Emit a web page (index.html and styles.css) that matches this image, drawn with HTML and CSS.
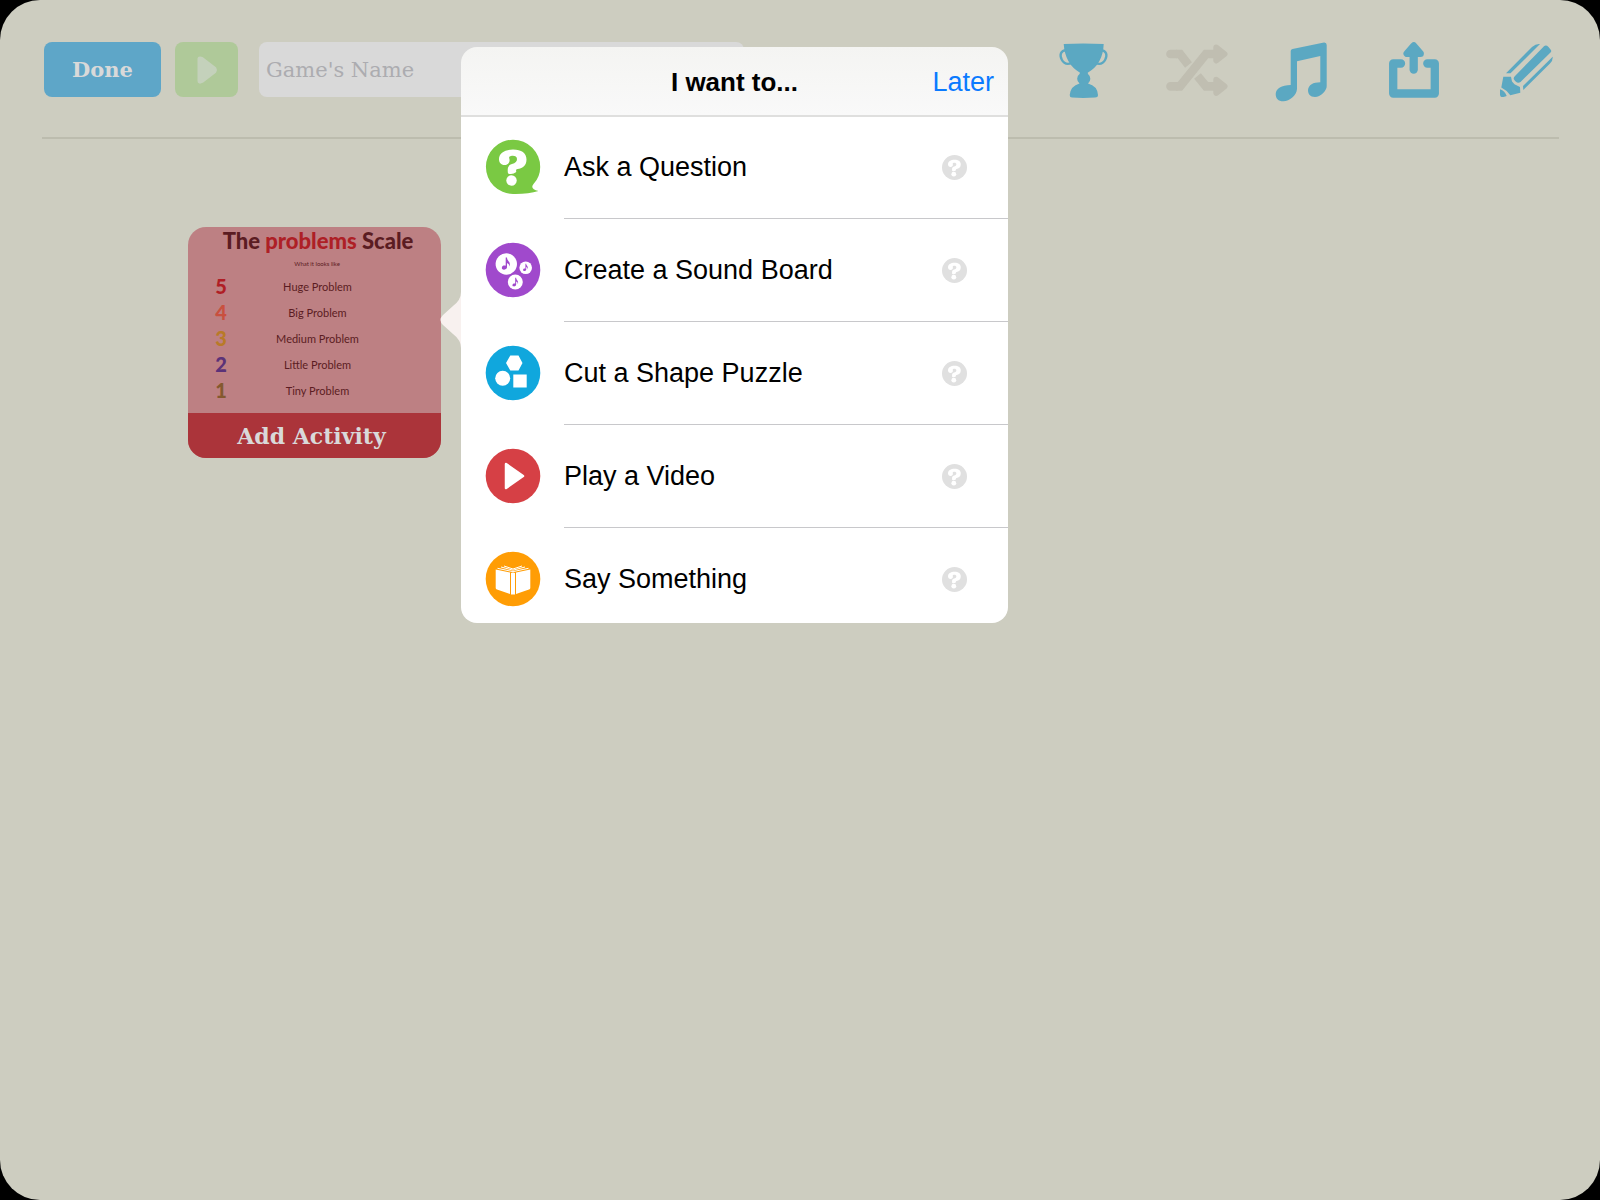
FILE: index.html
```html
<!DOCTYPE html>
<html lang="en">
<head>
    <meta charset="UTF-8">
    <meta name="viewport" content="width=device-width, initial-scale=1">
    <title>Game Editor</title>
    <link rel="stylesheet" href="styles.css">
</head>
<body>
    <!-- shared question mark -->
    <svg width="0" height="0" class="symbols" aria-hidden="true">
        <symbol id="question" viewBox="0 0 54 54">
            <path d="M13 20C13 14 19 10.500 27 10.500C35.500 10.500 40.500 14 40.500 20.500C40.500 27 36 29.500 31.500 30C29.700 30.300 30 31.500 30.300 33Q26.500 36 22 34.500C21 28.500 22.500 26 26 25C29.500 24 31 22.500 31 20C31 17.300 28 16.200 25 17Q22.500 17.500 23.300 19.500C24.500 23 22 26 18.500 26C15 26 13 23.500 13 20Z"/>
            <circle cx="25.500" cy="41.500" r="5.200"/>
        </symbol>
    </svg>

    <main class="screen">
        <header class="toolbar">
            <button type="button" class="btn done-btn">Done</button>
            <button type="button" class="btn play-btn" aria-label="Play">
                <svg width="24" height="32" viewBox="0 0 24 32"><path d="M4 4.500Q4 4 5 4L7 4.500L20 14.500Q21 16 20 17.500L7 27.500Q4 29 4 27Z" stroke-width="3" stroke-linejoin="round"/></svg>
            </button>
            <input type="text" class="name-input" placeholder="Game's Name" aria-label="Game's Name">
            <div class="tools">
                <button type="button" class="tool" aria-label="Rewards">
                    <svg width="64" height="64" viewBox="0 0 64 64">
                        <path d="M12.700 4Q32 3 52.700 4Q52 24 36.700 32.700L37 34A6 6 0 0 1 37 43.500Q46.500 46 47 55Q47 57.500 44 57.500Q32 58.300 21 57.500Q18.700 57.500 18.700 55Q19.500 46 28.500 43.500A6 6 0 0 1 28.500 34L29 32.700Q14 24 12.700 4Z"/>
                        <path d="M15.500 10C9.500 10.500 8.300 15 10.800 19.800C13 24 17 24.500 20.500 23.200M49.500 10C55.500 10.500 56.700 15 54.200 19.800C52 24 48 24.500 44.500 23.200" fill="none" stroke="currentColor" stroke-width="2.300"/>
                    </svg>
                </button>
                <button type="button" class="tool tool-off" aria-label="Shuffle">
                    <svg width="64" height="64" viewBox="0 0 64 64">
                        <g fill="none" stroke="currentColor" stroke-width="8.700">
                            <path d="M14 14H18L26.500 25M35.500 36L44 46.300H53M14 46.300H18L44 14H53"/>
                            <path d="M8.500 14H14M8.500 46.300H14" stroke-linecap="round"/>
                        </g>
                        <path d="M54.300 7.500L62.500 14L54.300 20.500ZM54.300 39.800L62.500 46.300L54.300 52.800Z" stroke="currentColor" stroke-width="6" stroke-linejoin="round"/>
                    </svg>
                </button>
                <button type="button" class="tool" aria-label="Music">
                    <svg width="64" height="64" viewBox="0 0 64 64">
                        <path d="M17.700 11Q17.700 9.300 19.500 9L51 2.500Q53.700 2.300 53.700 5V46C54 50.500 47.500 57 42 57C37 57 35 54 35 50C35.500 45 40 42.300 47.300 42.300V16L24 21.300V49C23.500 55.500 16.500 61.300 10.500 61.300C5 61.300 2.700 58.500 2.700 54C3 48.500 8.500 45 17.700 45Z"/>
                    </svg>
                </button>
                <button type="button" class="tool" aria-label="Share">
                    <svg width="64" height="64" viewBox="0 0 64 64">
                        <path d="M17 23.500H9.200V53.500H50.800V23.500H43.300" fill="none" stroke="currentColor" stroke-width="8.300" stroke-linecap="round" stroke-linejoin="round"/>
                        <path d="M29.700 13V29.500" fill="none" stroke="currentColor" stroke-width="8.300" stroke-linecap="round"/>
                        <path d="M29.700 5.800L23 13.500H36.400Z" stroke="currentColor" stroke-width="7" stroke-linejoin="round"/>
                    </svg>
                </button>
                <button type="button" class="tool" aria-label="Edit">
                    <svg width="64" height="64" viewBox="0 0 64 64">
                        <path d="M11 33.300L37 7Q41 3.500 45 4L15.500 33.300ZM28 46L57.700 16.700Q58 20.500 55 23.500L28.300 50ZM20 36L49 6.300Q51 4.500 53.500 7L55.500 9.500Q57 11 55.500 12.500L25.500 42Q24 43 22 42.500Q20 41.500 18.700 39Q18.500 37.500 20 36ZM8.300 36.700H16L17 41.500L19.500 44.300L25 47L25.300 52.700L15.300 55.300Q11.500 50 6.300 47.500ZM5 49.300Q10 51 11.700 56L8.500 57Q5 57.500 5 54.500Z"/>
                    </svg>
                </button>
            </div>
        </header>

        <section class="board">
            <article class="card">
                <div class="card-scale">
                    <h2>The <em>problems</em> Scale</h2>
                    <p class="card-note">What it looks like</p>
                    <ul class="levels">
                        <li><b class="level-5">5</b><span>Huge Problem</span></li>
                        <li><b class="level-4">4</b><span>Big Problem</span></li>
                        <li><b class="level-3">3</b><span>Medium Problem</span></li>
                        <li><b class="level-2">2</b><span>Little Problem</span></li>
                        <li><b class="level-1">1</b><span>Tiny Problem</span></li>
                    </ul>
                </div>
                <button type="button" class="card-btn">Add Activity</button>
            </article>
        </section>

        <div class="popover" role="dialog" aria-labelledby="popover-title">
            <svg class="popover-arrow" width="21" height="56" viewBox="0 0 21 56"><path d="M21 0Q21 8 13 14L3 23Q-2 28 3 33L13 42Q21 48 21 56Z"/></svg>
            <div class="popover-head">
                <h1 id="popover-title">I want to...</h1>
                <button type="button" class="later-btn">Later</button>
            </div>
            <ul class="menu">
                <li class="menu-item">
                    <svg class="menu-icon" width="56" height="56" viewBox="0 0 56 56">
                        <path d="M28 .7A27.200 27.200 0 0 1 55.200 28Q55.200 38 48.500 45Q44.500 50 53.500 52Q43 55.200 28 54.900A27.100 27.100 0 1 1 28 .7Z" fill="#7ac943"/>
                        <use href="#question" width="54" height="54" x="1" fill="#fff"/>
                    </svg>
                    <div class="menu-body">
                        <button type="button" class="menu-link">Ask a Question</button>
                        <button type="button" class="help-btn" aria-label="About Ask a Question"><svg width="25" height="25" viewBox="0 0 54 54"><use href="#question" width="54" height="54" fill="#fff"/></svg></button>
                    </div>
                </li>
                <li class="menu-item">
                    <svg class="menu-icon" width="56" height="56" viewBox="0 0 56 56">
                        <circle cx="28" cy="28" r="27.300" fill="#a049cc"/>
                        <g fill="#fff"><circle cx="21.300" cy="22" r="10.700"/><circle cx="40.700" cy="25.700" r="6.300"/><circle cx="30.300" cy="40" r="7.500"/></g>
                        <g fill="#a049cc">
                            <path id="note" d="M20.700 15.500H22C22 19 26 19.500 24.500 24.500Q24.300 21.500 22 21V25.500C21.500 28 17 28.500 16.800 26C17 23.500 19 23.300 20.700 23.700Z"/>
                            <use href="#note" transform="translate(28 12.500) scale(.6)"/>
                            <use href="#note" transform="translate(15.300 24.500) scale(.72)"/>
                        </g>
                    </svg>
                    <div class="menu-body">
                        <button type="button" class="menu-link">Create a Sound Board</button>
                        <button type="button" class="help-btn" aria-label="About Create a Sound Board"><svg width="25" height="25" viewBox="0 0 54 54"><use href="#question" width="54" height="54" fill="#fff"/></svg></button>
                    </div>
                </li>
                <li class="menu-item">
                    <svg class="menu-icon" width="56" height="56" viewBox="0 0 56 56">
                        <circle cx="28" cy="28" r="27.300" fill="#10a7dd"/>
                        <path d="M25.300 10.500H33.500L37.500 18L33.500 25.500H25.300L21 18ZM28.300 29.500H41.700V42.500H28.300Z" fill="#fff"/>
                        <circle cx="17.700" cy="33.300" r="7.500" fill="#fff"/>
                    </svg>
                    <div class="menu-body">
                        <button type="button" class="menu-link">Cut a Shape Puzzle</button>
                        <button type="button" class="help-btn" aria-label="About Cut a Shape Puzzle"><svg width="25" height="25" viewBox="0 0 54 54"><use href="#question" width="54" height="54" fill="#fff"/></svg></button>
                    </div>
                </li>
                <li class="menu-item">
                    <svg class="menu-icon" width="56" height="56" viewBox="0 0 56 56">
                        <circle cx="28" cy="28" r="27.300" fill="#d64045"/>
                        <path d="M21 16L38 28L21 40Z" fill="#fff" stroke="#fff" stroke-width="2.500" stroke-linejoin="round"/>
                    </svg>
                    <div class="menu-body">
                        <button type="button" class="menu-link">Play a Video</button>
                        <button type="button" class="help-btn" aria-label="About Play a Video"><svg width="25" height="25" viewBox="0 0 54 54"><use href="#question" width="54" height="54" fill="#fff"/></svg></button>
                    </div>
                </li>
                <li class="menu-item">
                    <svg class="menu-icon" width="56" height="56" viewBox="0 0 56 56">
                        <circle cx="28" cy="28" r="27.300" fill="#ff9d05"/>
                        <path d="M10.700 18.500L25 21.500V43L12 38.500Q10.700 38 10.700 37ZM45.300 18.500L31 21.500V43L44 38.500Q45.300 38 45.300 37ZM26 22L28 21.500L30 22V43.500H26Z" fill="#fff"/>
                        <path d="M12.500 17.300L25 20L28 20.700L31 20L43.500 17.300M16 16L28 19.200L40 16M19 15L28 18M37 15L28 18" fill="none" stroke="#fff"/>
                    </svg>
                    <div class="menu-body">
                        <button type="button" class="menu-link">Say Something</button>
                        <button type="button" class="help-btn" aria-label="About Say Something"><svg width="25" height="25" viewBox="0 0 54 54"><use href="#question" width="54" height="54" fill="#fff"/></svg></button>
                    </div>
                </li>
            </ul>
        </div>
    </main>
</body>
</html>
```
FILE: styles.css
```css
* {
    box-sizing: border-box;
}
body {
    margin: 0;
    background: #000;
    font-family: "Liberation Sans", Arial, sans-serif;
}
button {
    border: none;
    padding: 0;
    background: none;
    font-family: inherit;
    cursor: pointer;
}
h1, h2, p, ul {
    margin: 0;
    padding: 0;
}
ul {
    list-style: none;
}
svg {
    display: block;
    overflow: visible;
}
.symbols {
    position: absolute;
}
.screen {
    position: relative;
    min-height: 100vh;
    padding: 0 41px 0 42px;
    background: #cdcdc0;
    border-radius: 40px;
}

/* toolbar */
.toolbar {
    display: flex;
    align-items: center;
    height: 139px;
    padding: 2px 0 0 2px;
    border-bottom: 2px solid #bcbcae;
}
.btn {
    height: 55px;
    border-radius: 8px;
}
.done-btn {
    width: 117px;
    margin-right: 14px;
    background: #5ea6c8;
    color: #d9d9d9;
    font-family: "DejaVu Serif", serif;
    font-size: 21px;
    font-weight: bold;
}
.play-btn {
    display: flex;
    align-items: center;
    justify-content: center;
    width: 63px;
    margin-right: 21px;
    background: #afc999;
}
.play-btn svg {
    fill: #c4d1bb;
    stroke: #c4d1bb;
}
.name-input {
    width: 485px;
    height: 55px;
    padding: 0 7px;
    border: none;
    border-radius: 8px;
    background: #d9d9d9;
    font-family: "DejaVu Serif", serif;
    font-size: 21px;
}
.name-input::placeholder {
    color: #acacb0;
}
.tools {
    display: flex;
    gap: 47px;
    margin-left: auto;
    padding-top: 4px;
}
.tool {
    color: #5ba8c2;
}
.tool svg {
    fill: currentColor;
}
.tool-off {
    color: #c0beb1;
}

/* activity card */
.board {
    display: flex;
    padding: 88px 146px;
}
.card {
    width: 253px;
    overflow: hidden;
    border-radius: 18px;
    background: #bd8083;
    color: #5b1c22;
    font-family: Lato, sans-serif;
}
.card-scale {
    height: 186px;
}
.card h2 {
    padding-left: 7px;
    font-size: 22px;
    font-weight: 900;
    line-height: 28px;
    text-align: center;
    white-space: nowrap;
}
.card em {
    color: #ae1f26;
    font-style: normal;
}
.card-note {
    padding-left: 5px;
    font-size: 6px;
    line-height: 18px;
    text-align: center;
}
.levels li {
    display: flex;
    align-items: center;
    height: 26px;
    padding-left: 22px;
}
.levels b {
    width: 22px;
    font-size: 20px;
    font-weight: 900;
    text-align: center;
}
.levels span {
    flex: 1;
    padding-right: 38px;
    font-size: 11px;
    text-align: center;
}
.level-5 {
    color: #b01e25;
}
.level-4 {
    color: #c9503f;
}
.level-3 {
    color: #b97a27;
}
.level-2 {
    color: #5b3278;
}
.level-1 {
    color: #84592f;
}
.card-btn {
    display: block;
    width: 100%;
    height: 45px;
    padding-right: 6px;
    background: #ab343a;
    color: #d9d9d9;
    font-family: "DejaVu Serif", serif;
    font-size: 22px;
    font-weight: bold;
}

/* popover */
.popover {
    position: absolute;
    top: 47px;
    left: 461px;
    width: 547px;
}
.popover-arrow {
    position: absolute;
    top: 245px;
    right: 100%;
    fill: #f8f1ef;
}
.popover-head {
    display: grid;
    grid-template-columns: 1fr auto 1fr;
    align-items: center;
    height: 70px;
    padding: 2px 14px 0;
    border-bottom: 2px solid #dfdfde;
    border-radius: 16px 16px 0 0;
    background: linear-gradient(#f4f4f2, #f9f9f9);
}
.popover-head h1 {
    grid-column: 2;
    font-size: 26px;
    font-weight: bold;
}
.later-btn {
    justify-self: end;
    color: #0a7aff;
    font-size: 27px;
}
.menu {
    height: 506px;
    overflow: hidden;
    border-radius: 0 0 16px 16px;
    background: #fff;
}
.menu-item {
    display: flex;
    align-items: center;
    height: 103px;
    padding-left: 24px;
}
.menu-item:first-child {
    height: 102px;
}
.menu-icon {
    flex: none;
    margin: 0 23px 2px 0;
}
.menu-body {
    display: flex;
    flex: 1;
    align-items: center;
    height: 100%;
    padding-right: 41px;
    border-bottom: 1px solid #c8c8cb;
}
.menu-link {
    flex: 1;
    height: 100%;
    color: #000;
    font-size: 27px;
    text-align: left;
}
.help-btn {
    width: 25px;
    height: 25px;
    border-radius: 50%;
    background: #e0e0e0;
}
```
